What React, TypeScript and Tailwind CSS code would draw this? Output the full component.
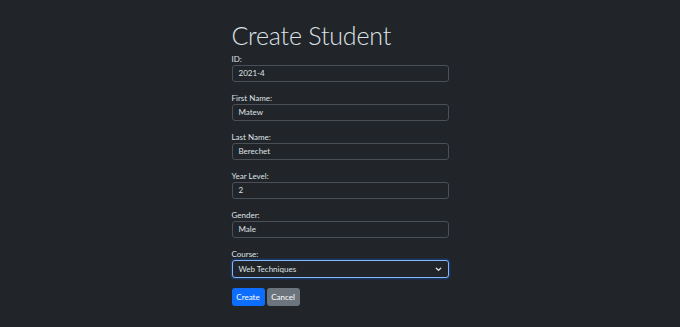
import React from "react";

const fields = [
  { label: "ID:", value: "2021-4" },
  { label: "First Name:", value: "Matew" },
  { label: "Last Name:", value: "Berechet" },
  { label: "Year Level:", value: "2" },
  { label: "Gender:", value: "Male" },
];

export default function App() {
  return (
    <div
      className="min-h-[327px] w-full bg-[#212529] text-[#dee2e6]"
      style={{ fontFamily: 'Lato, "Open Sans", sans-serif' }}
    >
      <div className="mx-auto w-[217px] pt-[20px]">
        <h1 className="text-[25px] font-light leading-[31px] mb-[2px] tracking-[-0.2px]">Create Student</h1>
        {fields.map((f) => (
          <div key={f.label} className="mb-[10px]">
            <label className="block text-[8px] leading-[12px]">{f.label}</label>
            <div className="h-[17px] rounded-[3px] border border-[#495057] bg-[#212529] px-[6px] text-[8px] leading-[15px]">
              {f.value}
            </div>
          </div>
        ))}
        <div className="mb-[10px]">
          <label className="block text-[8px] leading-[12px]">Course:</label>
          <div className="flex h-[18px] items-center justify-between rounded-[3px] border border-[#86b7fe] bg-[#212529] pl-[6px] pr-[6px] text-[8px] shadow-[0_0_0_1.5px_rgba(13,110,253,0.25)]">
            <span>Web Techniques</span>
            <svg width="7" height="7" viewBox="0 0 16 16" fill="none" stroke="#dee2e6" strokeWidth="3" strokeLinecap="round" strokeLinejoin="round">
              <path d="m3 5 5 5 5-5" />
            </svg>
          </div>
        </div>
        <div className="flex gap-[2px]">
          <button className="h-[18px] w-[33px] rounded-[3px] bg-[#0d6efd] text-[8px] text-white">Create</button>
          <button className="h-[18px] w-[33px] rounded-[3px] bg-[#6c757d] text-[8px] text-white">Cancel</button>
        </div>
      </div>
    </div>
  );
}
